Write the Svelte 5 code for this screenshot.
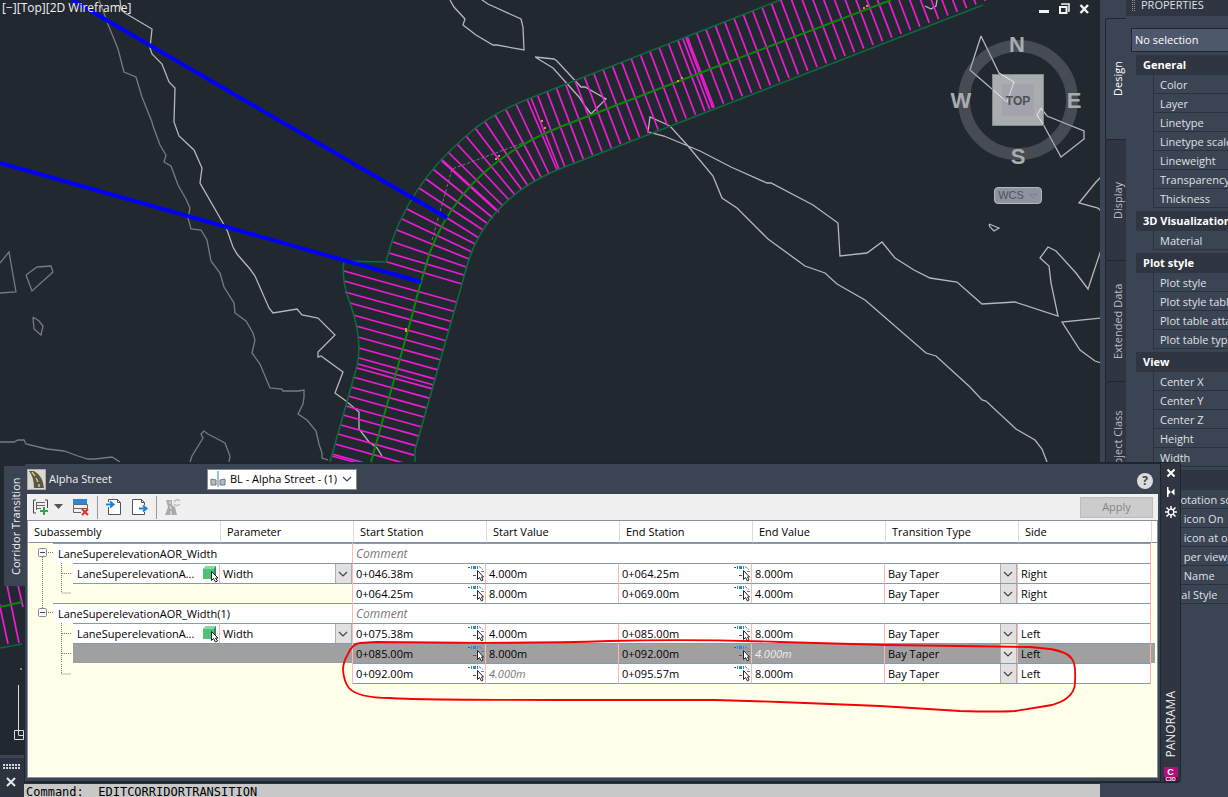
<script lang="ts">
	type Row = {
		name?: string;
		param?: string;
		start: string;
		startValue: string;
		end: string;
		endValue: string;
		side: string;
		selected?: boolean;
		dimStart?: boolean;
		dimEnd?: boolean;
	};

	const columns = [
		'Subassembly',
		'Parameter',
		'Start Station',
		'Start Value',
		'End Station',
		'End Value',
		'Transition Type',
		'Side'
	];

	const groups: { name: string; rows: Row[] }[] = [
		{
			name: 'LaneSuperelevationAOR_Width',
			rows: [
				{ name: 'LaneSuperelevationA...', param: 'Width', start: '0+046.38m', startValue: '4.000m', end: '0+064.25m', endValue: '8.000m', side: 'Right' },
				{ start: '0+064.25m', startValue: '8.000m', end: '0+069.00m', endValue: '4.000m', side: 'Right' }
			]
		},
		{
			name: 'LaneSuperelevationAOR_Width(1)',
			rows: [
				{ name: 'LaneSuperelevationA...', param: 'Width', start: '0+075.38m', startValue: '4.000m', end: '0+085.00m', endValue: '8.000m', side: 'Left' },
				{ start: '0+085.00m', startValue: '8.000m', end: '0+092.00m', endValue: '4.000m', side: 'Left', selected: true, dimEnd: true },
				{ start: '0+092.00m', startValue: '4.000m', end: '0+095.57m', endValue: '8.000m', side: 'Left', dimStart: true }
			]
		}
	];

	const tabs = [
		{ label: 'Design', active: true },
		{ label: 'Display' },
		{ label: 'Extended Data' },
		{ label: 'Object Class' }
	];

	const properties = [
		{ title: 'General', items: ['Color', 'Layer', 'Linetype', 'Linetype scale', 'Lineweight', 'Transparency', 'Thickness'] },
		{ title: '3D Visualization', items: ['Material'] },
		{ title: 'Plot style', items: ['Plot style', 'Plot style table', 'Plot table attached to', 'Plot table type'] },
		{ title: 'View', items: ['Center X', 'Center Y', 'Center Z', 'Height', 'Width'] },
		{ title: 'Misc', items: ['Annotation scale', 'UCS icon On', 'UCS icon at origin', 'UCS per viewport', 'UCS Name', 'Visual Style'] }
	];

	// contour lines
	const contoursDim = [
		'99,0 104,13 107,22 114,39 118,49 124,72 136,77 142,97 152,122 153,126 160,145 166,155 164,162 171,166 178,185 186,199 190,208 188,218 191,229 201,230 207,240 211,261 220,273 224,287 234,303 235,313 246,321 253,333 255,340 252,353 260,364 270,388 282,389 283,391 298,391 304,390 304,397 303,404 298,414 307,420 316,431 319,444 322,453 322,458 328,460',
		'0,263 9,252 16,292 0,293',
		'26,275 37,267 51,266 53,272 32,291 26,275',
		'33,317 39,321 43,326 41,335 34,329 33,317',
		'0,442 14,442 18,440 24,440 26,444 47,449 64,451 78,456 88,459 95,459 112,457 120,462',
		'190,462 192,456 203,438 201,434 204,431 208,434 225,443 230,456 229,462'
	];
	const contours = [
		'120,0 121,9 125,13 152,29 150,48 152,54 162,64 169,82 175,88 174,122 179,136 194,150 202,168 200,183 227,230 233,247 237,254 250,269 255,276 269,308 273,313 297,309 302,315 318,318 335,335 318,352 318,357 321,356 343,372 335,393 346,401 359,412 359,429 369,442 377,448 382,456',
		'450,0 454,7 465,19 463,25 476,35 493,45 497,45 524,50 523,27 521,19 488,4 482,0',
		'535,57 554,59 557,61 581,87 585,87 606,99 591,114 585,106 579,97 553,68 535,57',
		'1047,462 1042,449 1035,440 1016,429 986,401 982,400 970,387 936,356 926,353 865,300 837,284 825,273 805,266 768,239 737,208 722,198 713,176 688,146 670,126 650,117 648,132 664,136 688,146 700,151 731,167 767,183 771,183 813,205 838,223 840,256 867,253 882,242 895,258 914,270 930,278 957,282 982,304 1015,302 1058,316 1051,283 1049,266 1040,258 1048,247 1056,251 1076,273 1088,289 1101,250',
		'981,36 970,70 1007,102 1014,82 999,73 981,36',
		'1041,108 1037,115 1043,124 1061,157 1084,139 1084,131 1047,116 1041,108',
		'1101,177 1096,182 1079,203 1098,208 1101,211',
		'989,224 999,228 994,231 990,227 989,224',
		'1101,318 1062,322 1080,350 1095,361 1101,363',
		'925,6 931,9 936,6 937,0'
	];

	// cross sections through the bend, outer edge to inner edge
	const bend = [
		[527, 99, 557, 170], [531, 98, 559, 169], [516, 104, 549, 174], [506, 110, 541, 177],
		[495, 115, 535, 181], [485, 122, 528, 186], [475, 128, 522, 190], [466, 136, 515, 195],
		[457, 144, 509, 200], [448, 152, 503, 206], [441, 159, 499, 212], [442, 161, 497, 211],
		[433, 169, 493, 218], [426, 179, 488, 224], [419, 188, 483, 230], [447, 218, 479, 238],
		[407, 209, 475, 244], [402, 219, 472, 252], [397, 230, 469, 259], [393, 242, 466, 267],
		[389, 253, 464, 275], [387, 262, 462, 284]
	];

	// regular sections along the upper straight
	const straight = [682.7, 685.7, ...Array.from({ length: 49 }, (_, k) => 537.6 + k * 9.35)].map((x) => {
		const y = 99 - 0.393 * (x - 528);
		return [x, y, x + 27, y + 71];
	});

	// sections along the lower straight, widened on the left
	const lower = [
		[344, 271], [344, 281], [345, 292], [350, 303], [353, 315], [356, 326], [358, 337], [359, 348],
		[359, 358], [358, 364], [357, 368], [353, 377], [351, 387], [348, 396], [346, 406], [343, 415],
		[341, 425], [338, 434], [335, 444], [332, 454], [332, 456]
	].map(([x, y]) => {
		const t = (448 - 0.2806 * (y - 334) - x) / 1.0777;
		return [x, y, x + t, y + 0.277 * t];
	});

	const sections = [...bend, ...straight, ...lower];
</script>

{#snippet chevron()}
	<svg class="chevron" width="10" height="6" viewBox="0 0 10 6" aria-hidden="true">
		<path d="M1 1l4 4 4-4" fill="none" stroke="#444" stroke-width="1.2" />
	</svg>
{/snippet}

{#snippet pick()}
	<svg class="pick" width="17" height="17" viewBox="0 0 17 17" aria-hidden="true">
		<path d="M0 2.500h2M5 10.500h3" stroke="#555" />
		<path d="M11 1.500l4 3" stroke="#777" stroke-dasharray="3 1" />
		<path d="M3.500 1v3M9.500 1v3M13 6.500h3" stroke="#2a8ad4" />
		<rect x="5" y="1" width="3" height="3" fill="#2a8ad4" />
		<path d="M9.500 5.500v9l2-2 2 3.500 1.500-1-1.500-3h2z" fill="#fff" stroke="#222" />
	</svg>
{/snippet}

<div class="app">
	<div class="workspace">
		<main class="viewport">
			<svg class="drawing" role="img" aria-label="Corridor plan">
				<g fill="none" stroke="#777b7e" stroke-width="1.300">
					{#each contoursDim as points}
						<polyline {points} />
					{/each}
				</g>
				<g fill="none" stroke="#b5b7b8" stroke-width="1.300">
					{#each contours as points}
						<polyline {points} />
					{/each}
				</g>
				<g stroke="#ee1bd2" stroke-width="1.700">
					{#each sections as [x1, y1, x2, y2]}
						<line {x1} {y1} {x2} {y2} />
					{/each}
					<path d="M-4 588l12 56M7 585l12 58M15 572l8 35" />
				</g>
				<path d="M432 240L452 169L523 143" fill="none" stroke="#777" stroke-dasharray="3 2" />
				<g fill="none" stroke="#0b6b3b" stroke-width="1.600">
					<path d="M780 0L528 99Q490 114 466 136Q403 190 386 262L344 261Q341 280 350 303Q363 340 357 366L330 462" />
					<path d="M983 5L557 170Q486 200 467 266L415 450" />
					<path d="M415 450v12M0 648l22-4" />
				</g>
				<path
					d="M891 0L700 73L560 127Q463 165 430 252Q419 287 410 323L371 462M0 607l22-5"
					fill="none"
					stroke="#0a870a"
					stroke-width="2"
				/>
				<path d="M72 0L447 218M0 163L421 282" stroke="#0000ff" stroke-width="4" />
				<g fill="#ff7f50">
					<path d="M495 158h2v2h-2zM498 155h2v2h-2zM541 120h2v2h-2zM544 127h2v2h-2zM677 80h2v2h-2zM681 77h2v2h-2zM863 7h2v2h-2zM866 5h2v2h-2zM405 328h2v4h-2z" />
				</g>
				<path d="M18.500 685v50M14.500 730.500h9v9h-9zM18.500 735.500h5M20 669h2" fill="none" stroke="#ddd" />
			</svg>

			<div class="view-label">[−][Top][2D Wireframe]</div>

			<div class="window-buttons">
				<button type="button" aria-label="Minimize">
					<svg width="11" height="12" viewBox="0 0 11 12"><path d="M0 7h10v3H0z" fill="#f4f4f4" /></svg>
				</button>
				<button type="button" aria-label="Restore">
					<svg width="11" height="12" viewBox="0 0 11 12">
						<path d="M3 2V1h7v7H9" fill="none" stroke="#f4f4f4" stroke-width="1.500" />
						<path d="M1 4h6.500v6H1z" fill="none" stroke="#f4f4f4" stroke-width="2" />
					</svg>
				</button>
				<button type="button" aria-label="Close">
					<svg width="11" height="12" viewBox="0 0 11 12"><path d="M1.500 2l7.500 8M9 2L1.500 10" stroke="#f4f4f4" stroke-width="2.400" /></svg>
				</button>
			</div>

			<div class="navigator">
				<svg width="136" height="136" viewBox="0 0 136 136" role="img" aria-label="View cube">
					<circle cx="68" cy="68" r="54" fill="none" stroke="#8b8f94" stroke-opacity=".35" stroke-width="12" />
					<rect x="42.500" y="42.500" width="51" height="51" fill="#c8cacb" fill-opacity=".82" stroke="#83888c" />
					<rect x="52" y="52" width="32" height="32" fill="#9ca0ad" fill-opacity=".7" />
					<path d="M49 41l15 9-7 20-14-12" fill="none" stroke="#dcdddd" />
					<path d="M93 92l-6-9 4-7 2 3" fill="none" stroke="#dcdddd" />
					<text class="face" x="68" y="73">TOP</text>
					<text class="compass" x="67" y="20">N</text>
					<text class="compass" x="68" y="132">S</text>
					<text class="compass" x="11" y="76">W</text>
					<text class="compass" x="124" y="76">E</text>
				</svg>
				<button type="button" class="wcs">
					WCS
					<svg width="10" height="6" viewBox="0 0 10 6"><path d="M1 1h8L5 5z" fill="none" stroke="#7d808c" /></svg>
				</button>
			</div>
		</main>

		<footer class="dock">
			<div class="dock-handle">
				<svg width="17" height="6" viewBox="0 0 17 6" aria-hidden="true">
					<path d="M0 1h17M0 4h17" stroke="#d5d7da" stroke-width="2" stroke-dasharray="2 1" />
				</svg>
				<button type="button" aria-label="Close command line">
					<svg width="10" height="10" viewBox="0 0 10 10"><path d="M1 1l8 8M9 1L1 9" stroke="#e8e8e8" stroke-width="2" /></svg>
				</button>
			</div>
			<div class="command">Command:&nbsp; EDITCORRIDORTRANSITION</div>
		</footer>
	</div>

	<aside class="palette">
		<div class="tabs" role="tablist">
			{#each tabs as tab}
				<button type="button" role="tab" aria-selected={!!tab.active} class:active={tab.active}>{tab.label}</button>
			{/each}
		</div>
		<div class="palette-body">
			<h2>
				<svg width="3" height="12" viewBox="0 0 3 12" aria-hidden="true"><path d="M.5 0v12M2.500 0v12" stroke="#8d949f" stroke-dasharray="1 1" /></svg>
				PROPERTIES
			</h2>
			<select class="selection" aria-label="Selection">
				<option>No selection</option>
			</select>
			{#each properties as section}
				<section>
					<h3>{section.title}</h3>
					<ul>
						{#each section.items as item}
							<li>{item}</li>
						{/each}
					</ul>
				</section>
			{/each}
		</div>
	</aside>

	<div class="panorama">
		<div class="side-tab"><button type="button">Corridor Transition</button></div>

		<div class="frame">
			<header>
				<svg class="road" width="19" height="21" viewBox="0 0 19 21" aria-hidden="true">
					<rect x=".5" y=".5" width="18" height="20" fill="#dcd9d0" stroke="#aaa" />
					<path d="M2 2h5q9 5 10 17H7Q7 8 2 2z" fill="#555753" />
					<path d="M5 3l3 4M9 9l2 4M12 15v3" stroke="#f3c32c" stroke-width="1.500" />
				</svg>
				<span class="alignment">Alpha Street</span>
				<div class="baseline">
					<svg width="16" height="16" viewBox="0 0 16 16" aria-hidden="true">
						<path d="M1 8l5 1v5H1zM15 8l-5 1v5h5z" fill="#bbb" stroke="#777" />
						<path d="M8 0v16" stroke="#2a8ad4" />
					</svg>
					<select aria-label="Baseline">
						<option>BL - Alpha Street - (1)</option>
					</select>
					{@render chevron()}
				</div>
				<button type="button" class="help" aria-label="Help">?</button>
			</header>

			<div class="toolbar">
				<button type="button" aria-label="Add transition">
					<svg width="32" height="18" viewBox="0 0 32 18">
						<path d="M4 2H1.500v13H4M13 2h2.500v8" fill="none" stroke="#444" />
						<path d="M4 4.500h9M4 7.500h9M4 10.500h5M4.500 4v8" fill="none" stroke="#666" />
						<path d="M12 9v8M8 13h8" stroke="#2aa84a" stroke-width="2" />
						<path d="M22 6h9l-4.500 5z" fill="#555" />
					</svg>
				</button>
				<button type="button" aria-label="Delete transition">
					<svg width="18" height="18" viewBox="0 0 18 18">
						<path d="M1 1h14v5H1z" fill="#2a8ad4" />
						<path d="M1.500 6.500h14v4h-14zM1.500 10.500v4H9" fill="none" stroke="#666" />
						<path d="M10 11l6 6M16 11l-6 6" stroke="#e03030" stroke-width="2" />
					</svg>
				</button>
				<span class="divider"></span>
				<button type="button" aria-label="Import">
					<svg width="18" height="18" viewBox="0 0 18 18">
						<path d="M3.500 4V1.500h9l3 3v12h-12V9" fill="#fff" stroke="#555" />
						<path d="M12.500 1.500v3h3" fill="none" stroke="#555" />
						<path d="M1 6.500h6M5 3.500l3.500 3L5 9.500" fill="none" stroke="#1c82d6" stroke-width="2" />
					</svg>
				</button>
				<button type="button" aria-label="Export">
					<svg width="18" height="18" viewBox="0 0 18 18">
						<path d="M13.500 7V4.500l-3-3h-9v15h12V14" fill="#fff" stroke="#555" />
						<path d="M10.500 1.500v3h3" fill="none" stroke="#555" />
						<path d="M8 10.500h6M12 7.500l3.500 3-3.500 3" fill="none" stroke="#1c82d6" stroke-width="2" />
					</svg>
				</button>
				<span class="divider"></span>
				<button type="button" aria-label="Rebuild corridor" disabled>
					<svg width="18" height="18" viewBox="0 0 18 18">
						<path d="M2 2h6v5l3 2 2 8H1l3-8z" fill="#aaa" />
						<path d="M6 3v3M6 8l1 3M7 13v4" stroke="#eee" />
						<path d="M10 4q3-4 6-1M16 6q-3 3-6 0" fill="none" stroke="#bbb" stroke-width="1.500" />
					</svg>
				</button>
				<button type="button" class="apply" disabled>Apply</button>
			</div>

			<div class="grid">
				<table>
					<colgroup>
						<col class="c-sub" />
						{#each columns.slice(1) as _}
							<col class="c-val" />
						{/each}
						<col />
					</colgroup>
					<thead>
						<tr>
							{#each columns as column}
								<th>{column}</th>
							{/each}
							<td></td>
						</tr>
					</thead>
					<tbody>
						{#each groups as group, g}
							<tr>
								<td colspan="2" class="tree">
									<div class="node">
										<svg width="25" height="20" viewBox="0 0 25 20" aria-hidden="true">
											<path d={g ? 'M14.500 0v5' : 'M14.500 14v6'} stroke="#777" stroke-dasharray="1 1" />
											<path d="M20 9.500h5" stroke="#777" stroke-dasharray="1 1" />
											<rect x="10.500" y="5.500" width="8" height="8" rx="1" fill="#f6f6f6" stroke="#8a8a8a" />
											<path d="M12 9.500h5" stroke="#2b4a8a" />
										</svg>
										<span class="caption group">{group.name}</span>
									</div>
								</td>
								<td colspan="6" class="cell comment">Comment</td>
								<td></td>
							</tr>
							{#each group.rows as row, r}
								<tr class:selected={row.selected}>
									<td class="tree" colspan={row.name ? 1 : 2}>
										<div class="node">
											<svg width="45" height="20" viewBox="0 0 45 20" aria-hidden="true">
												{#if g === 0}
													<path d="M14.500 0v20" stroke="#777" stroke-dasharray="1 1" />
												{/if}
												<path
													d={r === group.rows.length - 1 ? 'M33.500 0v10h9' : 'M33.500 0v20M34 10.500h9'}
													fill="none"
													stroke="#777"
													stroke-dasharray="1 1"
												/>
											</svg>
											{#if row.name}
												<span class="caption">
													{row.name}
													<svg class="solid" width="17" height="18" viewBox="0 0 17 18" aria-hidden="true">
														<path d="M1 4l3-3h10v10l-2 3H1z" fill="#4fc07a" />
														<path d="M1 4l3-3h10l-2 3z" fill="#86dba4" />
														<path d="M12 4l2-3v10l-2 3z" fill="#2e8f55" />
														<path d="M9.500 6.500v9l2-2 2 3.500 2-1-2-3h2.500z" fill="#fff" stroke="#222" />
													</svg>
												</span>
											{:else}
												<span class="caption empty" class:first={r === 1}></span>
											{/if}
										</div>
									</td>
									{#if row.name}
										<td class="cell">
											<div class="combo">
												<select aria-label="Parameter"><option>{row.param}</option></select>
												{@render chevron()}
											</div>
										</td>
									{/if}
									<td class="cell"><div class="value">{row.start}{@render pick()}</div></td>
									<td class="cell" class:dim={row.dimStart}>{row.startValue}</td>
									<td class="cell"><div class="value">{row.end}{@render pick()}</div></td>
									<td class="cell" class:dim={row.dimEnd}>{row.endValue}</td>
									<td class="cell">
										<div class="combo">
											<select aria-label="Transition type"><option>Bay Taper</option></select>
											{@render chevron()}
										</div>
									</td>
									<td class="cell">{row.side}</td>
									<td class="rest"></td>
								</tr>
							{/each}
						{/each}
					</tbody>
				</table>
			</div>
		</div>

		<div class="title-strip">
			<button type="button" aria-label="Close">
				<svg width="10" height="10" viewBox="0 0 10 10"><path d="M1.500 1.500l7 7M8.500 1.500l-7 7" stroke="#fff" stroke-width="2" /></svg>
			</button>
			<button type="button" aria-label="Auto-hide">
				<svg width="10" height="10" viewBox="0 0 10 10"><path d="M1 0h1.500v10H1zM2 2l3 3-3 3zM8.500 1.500v7L5 5z" fill="#fff" /></svg>
			</button>
			<button type="button" aria-label="Settings">
				<svg width="12" height="12" viewBox="0 0 12 12">
					<circle cx="6" cy="6" r="2.800" fill="none" stroke="#fff" stroke-width="1.200" />
					<path d="M6 0v3M6 9v3M0 6h3M9 6h3M1.500 1.500l2.500 2.500M8 8l2.500 2.500M10.500 1.500L8 4M4 8l-2.500 2.500" stroke="#fff" stroke-width="1.500" />
				</svg>
			</button>
			<span class="title">PANORAMA</span>
			<div class="badge"><b>C</b><small>C3D</small></div>
		</div>
	</div>

	<svg class="markup" aria-hidden="true">
		<path
			d="M376 642L360 643Q352 644 348 654Q343 662 343 670Q344 682 349 688Q358 698 390 698Q420 700 560 700L715 700L780 702L880 706Q930 709 960 711Q1000 712 1015 711L1052 705Q1062 702 1067 698Q1075 692 1075 682Q1076 664 1072 659Q1068 652 1050 649L1030 647L960 646L887 645L780 642Q690 639 610 641Q520 644 376 642"
			fill="none"
			stroke="#f60000"
			stroke-width="1.800"
		/>
	</svg>
</div>

<style>
	:global(body) {
		margin: 0;
		background: #3b4453;
	}
	.app {
		position: relative;
		display: flex;
		height: 100vh;
		overflow: hidden;
		font: 11px/16px 'Open Sans', 'Noto Sans', sans-serif;
		color: #000;
	}
	button,
	select {
		font: inherit;
		color: inherit;
		margin: 0;
		padding: 0;
		border: 0;
		background: none;
	}
	select {
		appearance: none;
	}
	svg {
		display: block;
		flex: none;
	}
	.workspace {
		flex: 1;
		min-width: 0;
		display: flex;
		flex-direction: column;
		background: #222830;
	}
	.viewport {
		position: relative;
		flex: 1;
		overflow: hidden;
	}
	.drawing {
		width: 100%;
		height: 100%;
	}
	.view-label {
		position: absolute;
		top: 0;
		left: 2px;
		color: #f0f0f0;
		font-size: 12px;
	}
	.window-buttons {
		position: absolute;
		top: 3px;
		right: 10px;
		display: flex;
		gap: 9px;
	}
	.navigator {
		position: absolute;
		top: 32px;
		right: 14px;
		display: flex;
		flex-direction: column;
		align-items: center;
		gap: 19px;
	}
	.compass {
		font: bold 22px 'Liberation Sans', sans-serif;
		fill: #a9acae;
		text-anchor: middle;
	}
	.face {
		font: bold 12px 'Liberation Sans', sans-serif;
		fill: #4c5158;
		text-anchor: middle;
	}
	.wcs {
		display: flex;
		align-items: center;
		gap: 4px;
		padding: 0 3px;
		border: 1px solid #b3b5c0;
		border-radius: 4px;
		background: #8f929f;
		color: #4f535d;
		font: 11px/15px 'Liberation Sans', sans-serif;
	}
	.dock {
		display: flex;
		align-items: flex-end;
		height: 42px;
		background: #2d333f;
	}
	.dock-handle {
		box-sizing: border-box;
		display: flex;
		flex-direction: column;
		gap: 7px;
		width: 24px;
		height: 42px;
		padding: 6px 0 0 3px;
		border-top: 3px solid #3b4453;
	}
	.dock-handle button {
		margin-left: 3px;
		align-self: flex-start;
	}
	.command {
		flex: 1;
		height: 13px;
		padding-left: 2px;
		overflow: hidden;
		background: #c8c8c8;
		font: 12px/17px 'DejaVu Sans Mono', monospace;
	}

	.palette {
		display: flex;
		width: 123px;
		padding-left: 4px;
		border-left: 1px solid #3b4453;
		overflow: hidden;
		background: #3b4453;
		color: #dfe1e4;
	}
	.tabs {
		display: flex;
		flex-direction: column;
		width: 21px;
		padding-top: 18px;
	}
	/* turned by 180deg, so right and bottom borders show on the left and top */
	.tabs button {
		box-sizing: border-box;
		height: 121px;
		padding-right: 4px;
		border-right: 1px solid #20262e;
		border-bottom: 1px solid #20262e;
		border-radius: 0 0 3px 0;
		background: #2f3541;
		color: #b9bdc4;
		writing-mode: vertical-rl;
		transform: rotate(180deg);
		white-space: nowrap;
	}
	.tabs button.active {
		background: #3b4453;
		color: #fff;
	}
	.palette-body {
		flex: 1;
		min-width: 0;
		padding-left: 5px;
		white-space: nowrap;
	}
	h2 {
		display: flex;
		align-items: flex-start;
		gap: 6px;
		height: 16px;
		margin: 0 0 12px -5px;
		padding-left: 6px;
		background: #2f3541;
		font-size: 11px;
		font-weight: 400;
		line-height: 10px;
	}
	.selection {
		box-sizing: border-box;
		width: 200px;
		height: 24px;
		margin-bottom: 3px;
		padding-left: 3px;
		border: 1px solid #20262e;
		background: #4d586b;
		color: #fff;
	}
	section {
		margin: 0 0 3px 5px;
	}
	h3 {
		height: 20px;
		margin: 0;
		padding-left: 7px;
		background: #2f3541;
		color: #fff;
		font-size: 11px;
		font-weight: 700;
		line-height: 20px;
	}
	ul {
		margin: 0 0 0 17px;
		padding: 0;
		border-left: 1px solid #2c323d;
		list-style: none;
	}
	li {
		box-sizing: border-box;
		height: 19px;
		padding-left: 6px;
		border-bottom: 1px solid #2c323d;
		line-height: 19px;
	}

	.panorama {
		position: absolute;
		inset: 462px 47px 14px 4px;
		display: flex;
	}
	.side-tab {
		width: 20px;
		padding-top: 4px;
		flex: none;
	}
	.side-tab button {
		height: 120px;
		width: 21px;
		padding-right: 3px;
		background: #3b4453;
		color: #f0f0f0;
		writing-mode: vertical-rl;
		transform: rotate(180deg);
		white-space: nowrap;
	}
	.frame {
		flex: 1;
		min-width: 0;
		display: flex;
		flex-direction: column;
		box-sizing: border-box;
		padding: 0 2px 3px;
		border: 1px solid #20262e;
		border-width: 2px 1px;
		background: #3b4453;
	}
	header {
		display: flex;
		align-items: center;
		height: 30px;
		color: #f0f0f0;
	}
	.alignment {
		width: 158px;
		margin-left: 3px;
	}
	.baseline {
		box-sizing: border-box;
		display: flex;
		align-items: center;
		gap: 4px;
		width: 150px;
		height: 21px;
		padding: 0 4px 0 2px;
		border: 1px solid #8a8a8a;
		background: #fff;
		color: #000;
	}
	.baseline select {
		flex: 1;
		min-width: 0;
	}
	.help {
		width: 16px;
		height: 16px;
		margin: 4px 5px 0 auto;
		border-radius: 50%;
		background: #dcdcdc;
		color: #444;
		font-size: 12px;
		font-weight: 700;
		line-height: 16px;
	}
	.toolbar {
		display: flex;
		align-items: center;
		gap: 8px;
		height: 26px;
		padding: 0 5px;
		background: #f0f0f0;
	}
	.divider {
		width: 1px;
		height: 23px;
		margin: 0 -1px;
		background: #999;
	}
	.toolbar .apply {
		box-sizing: border-box;
		width: 73px;
		height: 21px;
		margin-left: auto;
		border: 1px solid #bcbcbc;
		background: #cccccc;
		color: #858585;
	}
	.grid {
		flex: 1;
		overflow: hidden;
		border: 1px solid #8a8f99;
		background: #ffffea;
	}
	table {
		width: 100%;
		table-layout: fixed;
		border-spacing: 0;
	}
	.c-sub {
		width: 192px;
	}
	.c-val {
		width: 133px;
	}
	th,
	td {
		box-sizing: border-box;
		height: 20px;
		padding: 0;
		text-align: left;
		white-space: nowrap;
	}
	th,
	thead td {
		height: 22px;
		border-bottom: 1px solid #8a8f99;
		border-left: 1px solid #dcdcdc;
		background: #fff;
		font-weight: 400;
	}
	th {
		padding-left: 6px;
	}
	th:first-child {
		border-left-color: #fff;
		padding-left: 5px;
	}
	.tree {
		border-right: 1px solid #ffb6b6;
	}
	.node {
		display: flex;
		height: 20px;
	}
	.caption {
		flex: 1;
		display: flex;
		align-items: center;
		justify-content: space-between;
		min-width: 0;
		padding-left: 4px;
		border-top: 1px solid #7f9db9;
		background: #fff;
	}
	.caption.group {
		padding-left: 5px;
	}
	.caption.empty {
		border-color: transparent;
		background: none;
	}
	.caption.first {
		border-color: #7f9db9;
	}
	.selected .caption.empty,
	.selected .cell {
		background-color: #a0a0a0;
	}
	.selected .rest {
		background: linear-gradient(#a0a0a0, #a0a0a0) no-repeat 0 0 / 4px 100%;
	}
	.cell {
		padding-left: 3px;
		border-top: 1px solid #7f9db9;
		border-right: 1px solid #ffb6b6;
		background: #fff;
	}
	tbody tr:last-child .cell {
		height: 21px;
		border-bottom: 1px solid #7f9db9;
	}
	.comment {
		color: #777;
		font-size: 12px;
		font-style: italic;
	}
	.dim {
		color: #777;
		font-style: italic;
	}
	.selected .dim {
		color: #eee;
	}
	.value {
		display: flex;
		align-items: center;
		justify-content: space-between;
		height: 19px;
	}
	.combo {
		position: relative;
		display: flex;
		height: 19px;
	}
	.combo select {
		width: 100%;
		background: linear-gradient(to left, #adadad 1px, #e1e1e1 1px 16px, #adadad 16px 17px, transparent 17px);
	}
	.combo .chevron {
		position: absolute;
		top: 7px;
		right: 4px;
		pointer-events: none;
	}
	.title-strip {
		display: flex;
		flex-direction: column;
		align-items: center;
		gap: 9px;
		box-sizing: border-box;
		width: 20px;
		padding: 5px 0 0;
		border: 1px solid #20262e;
		border-left: 0;
		border-radius: 0 4px 4px 0;
		background: #2f3541;
		color: #f0f0f0;
	}
	.title {
		margin-top: auto;
		font-size: 12px;
		writing-mode: vertical-rl;
		transform: rotate(180deg);
	}
	.badge {
		display: flex;
		flex-direction: column;
		width: 14px;
		background: #b0107c;
		color: #fff;
		font: 9px/10px 'Liberation Sans', sans-serif;
		text-align: center;
	}
	.badge small {
		background: #5e0545;
		font-size: 5px;
		font-weight: 700;
		line-height: 5px;
	}
	.markup {
		position: absolute;
		inset: 0;
		width: 100%;
		height: 100%;
		pointer-events: none;
	}
</style>
